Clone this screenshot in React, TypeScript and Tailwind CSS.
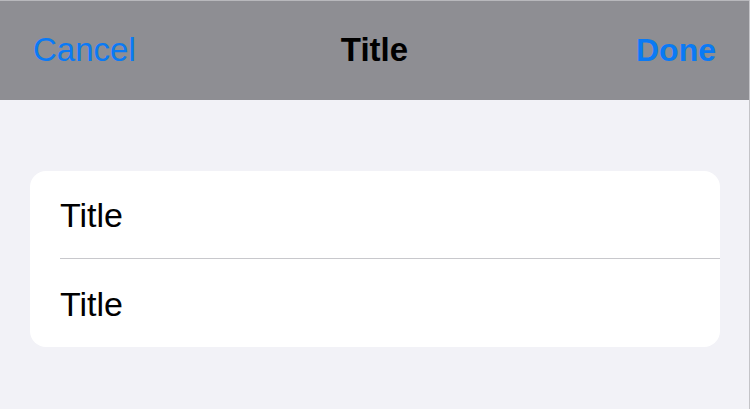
export default function App() {
  return (
    <div
      className="flex h-[409px] w-[750px] flex-col border-r border-[#c4c4c8] bg-[#f2f2f7]"
      style={{ fontFamily: '"Liberation Sans", Arial, sans-serif' }}
    >
      <header className="grid h-[100px] shrink-0 grid-cols-3 items-center border-t border-[#b8b8bc] bg-[#8e8e93] px-[33px] pb-[1px]">
        <span className="justify-self-start text-[33px] text-[#0a7af5]">Cancel</span>
        <span className="justify-self-center text-[33px] font-bold text-black">Title</span>
        <span className="justify-self-end text-[32px] font-bold text-[#0a7af5]">Done</span>
      </header>
      <div className="pl-[30px] pr-[29px] pt-[71px]">
        <div className="overflow-hidden rounded-[16px] bg-white">
          <div className="flex h-[87px] items-center pl-[30px] pt-[2px] text-[34px] text-black">
            Title
          </div>
          <div className="ml-[30px] h-px bg-[#c8c8cc]" />
          <div className="flex h-[88px] items-center pl-[30px] pt-[2px] text-[34px] text-black">
            Title
          </div>
        </div>
      </div>
    </div>
  );
}
